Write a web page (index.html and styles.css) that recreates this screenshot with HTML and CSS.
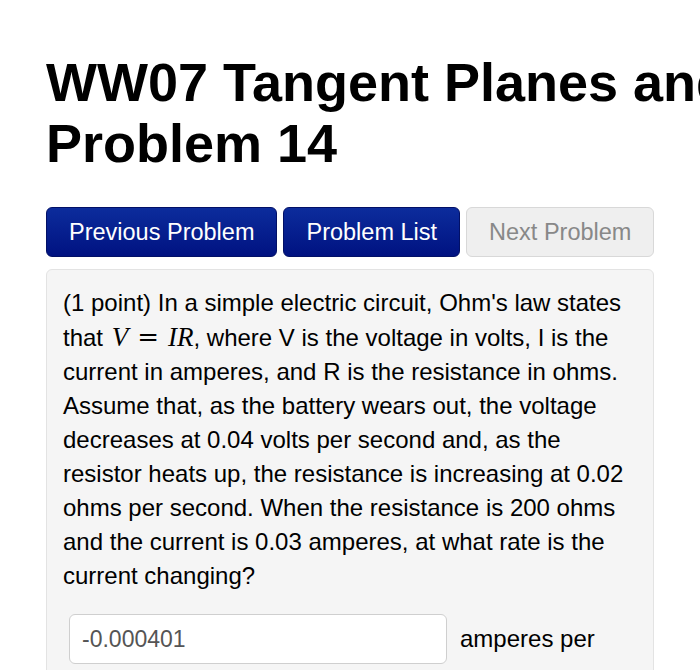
FILE: index.html
```html
<!DOCTYPE html>
<html>
<head>
<meta charset="utf-8">
<link rel="stylesheet" href="styles.css">
</head>
<body>
<div class="page">
  <h1 class="title"><span class="title-line">WW07 Tangent Planes and Differentials:</span><span class="title-line">Problem 14</span></h1>
  <div class="nav">
    <a class="btn btn-primary">Previous Problem</a>
    <a class="btn btn-primary">Problem List</a>
    <a class="btn btn-disabled">Next Problem</a>
  </div>
  <div class="problem">
    <p class="text">(1 point) In a simple electric circuit, Ohm's law states that <span class="math"><i class="mv">V</i><span class="eq">=</span><i>IR</i></span>, where V is the voltage in volts, I is the current in amperes, and R is the resistance in ohms. Assume that, as the battery wears out, the voltage decreases at 0.04 volts per second and, as the resistor heats up, the resistance is increasing at 0.02 ohms per second. When the resistance is 200 ohms and the current is 0.03 amperes, at what rate is the current changing?</p>
    <div class="answer">
      <div class="input">-0.000401</div>
      <span class="unit">amperes per second</span>
    </div>
  </div>
</div>
</body>
</html>
```
FILE: styles.css
```css
html, body {
  margin: 0;
  padding: 0;
  background: #ffffff;
  overflow: hidden;
}
body {
  font-family: "Liberation Sans", Arial, sans-serif;
  color: #000;
}
.page {
  padding: 0 0 0 46px;
  width: 608px;
}
.title {
  margin: 0;
  padding-top: 52px;
  font-size: 54px;
  line-height: 61px;
  font-weight: bold;
  letter-spacing: 0;
}
.title-line {
  display: block;
  white-space: nowrap;
}
.nav {
  display: flex;
  gap: 6px;
  margin-top: 33px;
}
.btn {
  display: block;
  flex: none;
  white-space: nowrap;
  height: 50px;
  box-sizing: border-box;
  line-height: 48px;
  padding: 0 22px;
  font-size: 23.5px;
  border-radius: 6px;
  border: 1px solid;
}
.btn-primary {
  color: #fff;
  background: linear-gradient(#0c2c9c, #001281);
  border-color: #021066;
}
.btn-disabled {
  color: #888888;
  background: #efefef;
  border-color: #d8d8d8;
}
.problem {
  margin-top: 12px;
  background: #f5f5f5;
  border: 1px solid #e3e3e3;
  border-radius: 6px;
  padding: 16px 16px 60px 16px;
}
.text {
  margin: 0;
  font-size: 24px;
  line-height: 34px;
}
.math {
  font-family: "Liberation Serif", "Times New Roman", serif;
  font-size: 27px;
}
.mv {
  margin-left: 2px;
}
.eq {
  font-family: "DejaVu Serif", serif;
  font-size: 26px;
  margin: 0 9px 0 9px;
}
.answer {
  margin-top: 21px;
  display: flex;
  align-items: flex-start;
  gap: 13px;
  padding-left: 6px;
}
.input {
  flex: none;
  width: 378px;
  height: 50px;
  box-sizing: border-box;
  background: #fff;
  border: 1px solid #cfcfcf;
  border-radius: 6px;
  padding: 0 12px;
  line-height: 48px;
  font-size: 23px;
  color: #555;
}
.unit {
  font-size: 24px;
  line-height: 44px;
  padding-top: 3px;
}
```
